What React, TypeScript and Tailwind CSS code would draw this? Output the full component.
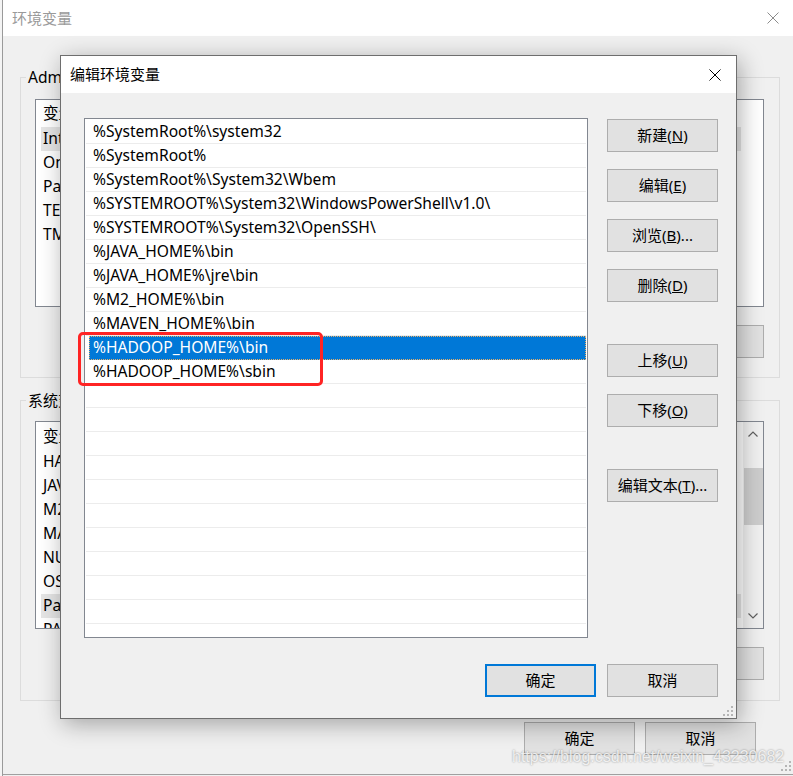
import React from 'react';

const paths = [
  '%SystemRoot%\\system32',
  '%SystemRoot%',
  '%SystemRoot%\\System32\\Wbem',
  '%SYSTEMROOT%\\System32\\WindowsPowerShell\\v1.0\\',
  '%SYSTEMROOT%\\System32\\OpenSSH\\',
  '%JAVA_HOME%\\bin',
  '%JAVA_HOME%\\jre\\bin',
  '%M2_HOME%\\bin',
  '%MAVEN_HOME%\\bin',
  '%HADOOP_HOME%\\bin',
  '%HADOOP_HOME%\\sbin',
];

const SELECTED = 9;
const TOTAL_ROWS = 21;

function Btn({ children, primary = false }: { children: React.ReactNode; primary?: boolean }) {
  return (
    <div
      className={
        primary
          ? 'flex items-center justify-center w-[111px] h-[33px] shrink-0 bg-[#e1e1e1] border-2 border-[#0078d7] text-[15px] text-black'
          : 'flex items-center justify-center w-[111px] h-[33px] shrink-0 bg-[#e1e1e1] border border-[#adadad] text-[15px] text-black'
      }
    >
      {children}
    </div>
  );
}

function CloseIcon({ color }: { color: string }) {
  return (
    <svg width="12" height="12" viewBox="0 0 12 12">
      <path d="M0.5 0.5 L11.5 11.5 M11.5 0.5 L0.5 11.5" stroke={color} strokeWidth="1" />
    </svg>
  );
}

function Grip() {
  return (
    <svg width="11" height="11" viewBox="0 0 11 11">
      <g fill="#b5b5b5">
        <rect x="8" y="0" width="2" height="2" />
        <rect x="4" y="4" width="2" height="2" />
        <rect x="8" y="4" width="2" height="2" />
        <rect x="0" y="8" width="2" height="2" />
        <rect x="4" y="8" width="2" height="2" />
        <rect x="8" y="8" width="2" height="2" />
      </g>
    </svg>
  );
}

function BgList({
  header,
  rows,
  highlight,
  headerH,
  scrollbar = false,
}: {
  header: string;
  rows: string[];
  highlight: number;
  headerH: string;
  scrollbar?: boolean;
}) {
  return (
    <div className="ml-[14px] w-[729px] h-[208px] border border-[#828790] bg-white flex overflow-hidden text-[15.6px]">
      <div className="flex-1 flex flex-col pt-[1px] overflow-hidden">
        <div className={`${headerH} flex items-center pl-[7px] shrink-0`}>{header}</div>
        {rows.map((r, i) => (
          <div
            key={i}
            className={
              i === highlight
                ? 'h-[24px] w-[700px] shrink-0 flex items-center ml-[5px] pl-[2px] bg-[#e5e5e5]'
                : 'h-[24px] w-[700px] shrink-0 flex items-center ml-[5px] pl-[2px]'
            }
          >
            {r}
          </div>
        ))}
      </div>
      {scrollbar && (
        <div className="w-[20px] bg-[#f0f0f0] flex flex-col items-center shrink-0">
          <div className="h-[24px] flex items-center justify-center">
            <svg width="10" height="6" viewBox="0 0 10 6">
              <path d="M0.5 5.5 L5 1 L9.5 5.5" stroke="#606060" fill="none" strokeWidth="1.2" />
            </svg>
          </div>
          <div className="h-[22px]" />
          <div className="w-[19px] h-[57px] bg-[#cdcdcd]" />
          <div className="flex-1" />
          <div className="h-[24px] flex items-center justify-center">
            <svg width="10" height="6" viewBox="0 0 10 6">
              <path d="M0.5 0.5 L5 5 L9.5 0.5" stroke="#606060" fill="none" strokeWidth="1.2" />
            </svg>
          </div>
        </div>
      )}
    </div>
  );
}

export default function App() {
  const rows = Array.from({ length: TOTAL_ROWS }, (_, i) => paths[i] ?? '');
  return (
    <div className="w-[793px] h-[776px] relative overflow-hidden bg-[#f0f0f0] flex font-['Noto_Sans','Noto_Sans_CJK_SC',sans-serif] text-[15px] text-black">
      {/* edge of the window behind */}
      <div className="w-[3px] h-full bg-[#f4f4f4] border-r border-[#9a9a9a] shrink-0" />

      {/* 环境变量 window */}
      <div className="flex-1 h-[775px] flex flex-col border-b border-[#a0a0a0]">
        <div className="h-[36px] bg-white flex items-center justify-between pl-[9px] pr-[14px] shrink-0">
          <span className="text-[#9a9a9a]">环境变量</span>
          <CloseIcon color="#8c8c8c" />
        </div>
        <div className="flex flex-col pl-[17px]">
          <fieldset className="mt-[30px] w-[760px] border border-[#dcdcdc] pb-[19px]">
            <legend className="ml-[5px] px-[2px] leading-[22px] text-[15.6px]">Administrator 的用户变量(U)</legend>
            <div className="mt-[11px]">
              <BgList
                header="变量"
                rows={['IntelliJ IDEA', 'OneDrive', 'Path', 'TEMP', 'TMP']}
                highlight={0}
                headerH="h-[26px]"
              />
            </div>
            <div className="mt-[18px] w-[743px] flex justify-end gap-[11px]">
              <Btn>新建(N)...</Btn>
              <Btn>编辑(E)...</Btn>
              <Btn>删除(D)</Btn>
            </div>
          </fieldset>

          <fieldset className="mt-[11px] w-[760px] border border-[#dcdcdc] pb-[20px]">
            <legend className="ml-[5px] px-[2px] leading-[22px]">系统变量(S)</legend>
            <div className="mt-[10px]">
              <BgList
                header="变量"
                rows={['HADOOP_HOME', 'JAVA_HOME', 'M2_HOME', 'MAVEN_HOME', 'NUMBER_OF_PROCESSORS', 'OS', 'Path', 'PATHEXT']}
                highlight={6}
                headerH="h-[27px]"
                scrollbar
              />
            </div>
            <div className="mt-[18px] w-[743px] flex justify-end gap-[11px]">
              <Btn>新建(W)...</Btn>
              <Btn>编辑(I)...</Btn>
              <Btn>删除(L)</Btn>
            </div>
          </fieldset>

          <div className="mt-[21px] w-[736px] flex justify-end gap-[10px]">
            <Btn>确定</Btn>
            <Btn>取消</Btn>
          </div>
        </div>
      </div>

      {/* window resize grip */}
      <div className="absolute right-[1px] bottom-[4px]">
        <Grip />
      </div>

      {/* 编辑环境变量 dialog */}
      <div className="absolute left-[60px] top-[55px] w-[677px] h-[664px] border border-[#6e6e6e] bg-[#f0f0f0] shadow-[3px_5px_22px_rgba(0,0,0,0.32)] flex flex-col">
        <div className="h-[37px] bg-white flex items-center justify-between pl-[9px] pr-[15px] shrink-0">
          <span>编辑环境变量</span>
          <CloseIcon color="#000000" />
        </div>
        <div className="flex flex-col pl-[23px] pt-[25px]">
          <div className="flex">
            <div className="w-[504px] h-[520px] border border-[#828790] bg-white pt-[1px] pr-[1px] overflow-hidden text-[15.6px]">
              {rows.map((p, i) => (
                <div
                  key={i}
                  className={
                    i === SELECTED
                      ? 'h-[24px] flex items-center ml-[4px] pl-[3px] bg-[#0078d7] text-white border border-dotted border-[#e9b06a]'
                      : 'h-[24px] flex items-center ml-[1px] pl-[7px] border-b border-[#ececec]'
                  }
                >
                  {p}
                </div>
              ))}
            </div>
            <div className="ml-[19px] mt-[1px] flex flex-col">
              <Btn>
                <span>新建(<u>N</u>)</span>
              </Btn>
              <div className="h-[17px]" />
              <Btn>
                <span>编辑(<u>E</u>)</span>
              </Btn>
              <div className="h-[17px]" />
              <Btn>
                <span>浏览(<u>B</u>)...</span>
              </Btn>
              <div className="h-[17px]" />
              <Btn>
                <span>删除(<u>D</u>)</span>
              </Btn>
              <div className="h-[42px]" />
              <Btn>
                <span>上移(<u>U</u>)</span>
              </Btn>
              <div className="h-[17px]" />
              <Btn>
                <span>下移(<u>O</u>)</span>
              </Btn>
              <div className="h-[42px]" />
              <Btn>
                <span>编辑文本(<u>T</u>)...</span>
              </Btn>
            </div>
          </div>
          <div className="mt-[26px] pr-[18px] flex justify-end gap-[11px]">
            <Btn primary>确定</Btn>
            <Btn>取消</Btn>
          </div>
        </div>

        {/* red annotation */}
        <div className="absolute left-[17px] top-[276px] w-[245px] h-[54px] border-[3px] border-[#ff2424] rounded-[5px]" />

        <div className="absolute right-[2px] bottom-[1px]">
          <Grip />
        </div>
      </div>

      {/* watermark */}
      <div className="absolute left-[512px] top-[748px] font-['Liberation_Sans',Arial,sans-serif] text-[16px] leading-[18px] text-white/80 [text-shadow:0_0_2px_rgba(0,0,0,0.45)]">
        https://blog.csdn.net/weixin_43230682
      </div>
    </div>
  );
}
